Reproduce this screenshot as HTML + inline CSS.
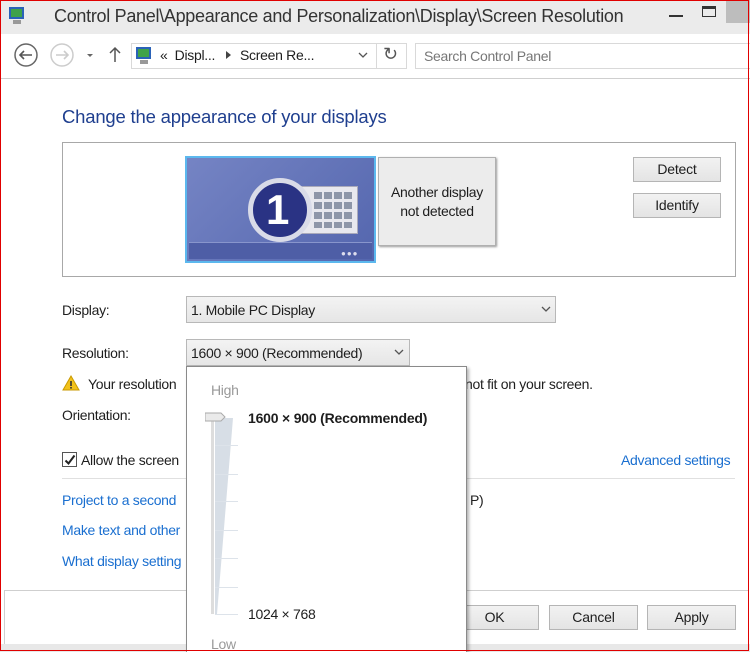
<!DOCTYPE html>
<html><head><meta charset="utf-8"><style>
*{margin:0;padding:0;box-sizing:border-box}
html,body{width:750px;height:652px;overflow:hidden}
body{background:#fff;font-family:"Liberation Sans",sans-serif;color:#1e1e1e;position:relative}
.a{position:absolute;white-space:nowrap}
.t{font-size:14px;letter-spacing:-0.3px}
.btn{position:absolute;background:linear-gradient(#f2f2f2,#e4e4e4);border:1px solid #b5b5b5;font-size:14px;text-align:center;letter-spacing:-0.2px}
.link{color:#1a6fd0}
.dd{position:absolute;background:linear-gradient(#f3f3f3,#e6e6e6);border:1px solid #b8b8b8;font-size:14px;padding:5px 0 0 4px;letter-spacing:-0.3px}
.tick{position:absolute;left:215px;width:23px;height:1px;background:#dde3ea}
</style></head><body>
<div class="a" style="left:0;top:0;width:750px;height:34px;background:#ebebeb"></div>
<svg class="a" style="left:8px;top:6px" width="18" height="20"><rect x="1" y="1" width="15" height="12" fill="#2a62b8"/><rect x="3" y="3" width="11" height="8" fill="#3fa24a"/><rect x="5" y="14" width="8" height="4" fill="#999"/></svg>
<div class="a" style="left:54px;top:6px;font-size:18px;color:#333;letter-spacing:-0.3px">Control Panel\Appearance and Personalization\Display\Screen Resolution</div>
<div class="a" style="left:669px;top:15px;width:14px;height:2px;background:#333"></div>
<div class="a" style="left:702px;top:6px;width:14px;height:11px;border:1px solid #333;border-top-width:3px"></div>
<div class="a" style="left:726px;top:0;width:24px;height:23px;background:#bdbdbd"></div>
<div class="a" style="left:0;top:78px;width:750px;height:1px;background:#cfcfcf"></div>
<svg class="a" style="left:12px;top:42px" width="110" height="28">
<circle cx="14" cy="13" r="11" fill="none" stroke="#666" stroke-width="1.5"/><path d="M20 13H8M12 9l-4 4 4 4" fill="none" stroke="#555" stroke-width="1.6"/>
<circle cx="50" cy="13" r="11" fill="none" stroke="#ccc" stroke-width="1.5"/><path d="M44 13h12M52 9l4 4-4 4" fill="none" stroke="#ccc" stroke-width="1.6"/>
<path d="M75 12l3 3 3-3z" fill="#666"/><path d="M103 20V6M98 11l5-5 5 5" fill="none" stroke="#555" stroke-width="1.5"/></svg>
<div class="a" style="left:131px;top:43px;width:276px;height:26px;border:1px solid #d9d9d9"></div>
<div class="a" style="left:376px;top:43px;width:1px;height:26px;background:#d9d9d9"></div>
<svg class="a" style="left:135px;top:46px" width="20" height="20"><rect x="1" y="1" width="15" height="12" fill="#2a62b8"/><rect x="3" y="3" width="11" height="8" fill="#3fa24a"/><rect x="5" y="14" width="8" height="4" fill="#999"/></svg>
<div class="a t" style="left:160px;top:47px">«&nbsp; Displ...</div>
<div class="a" style="left:226px;top:51px;width:0;height:0;border:4px solid transparent;border-left:5px solid #444;border-right:0"></div>
<div class="a t" style="left:240px;top:47px">Screen Re...</div>
<svg class="a" style="left:358px;top:52px" width="10" height="8"><path d="M1 1l4 4 4-4" fill="none" stroke="#555" stroke-width="1.3"/></svg>
<div class="a" style="left:383px;top:44px;font-size:18px;color:#555">&#8635;</div>
<div class="a" style="left:415px;top:43px;width:340px;height:26px;border:1px solid #d9d9d9"></div>
<div class="a t" style="left:424px;top:48px;color:#777">Search Control Panel</div>
<div class="a" style="left:62px;top:106px;font-size:18.5px;color:#1f3f8f;letter-spacing:-0.2px">Change the appearance of your displays</div>
<div class="a" style="left:62px;top:142px;width:674px;height:135px;border:1px solid #a8a8a8"></div>
<div class="a" style="left:185px;top:156px;width:191px;height:107px;border:2px solid #5cb8ee;background:linear-gradient(135deg,#7584c4,#5466ae)"></div>
<div class="a" style="left:189px;top:242px;width:183px;height:17px;background:#4e5ea6;border-top:1px solid #8895cc"></div>
<div class="a" style="left:341px;top:249px;font-size:8px;color:#dde;letter-spacing:1px">●●●</div>
<div class="a" style="left:290px;top:186px;width:68px;height:48px;background:#e8e8ee;border:1px solid #aab"></div>
<svg class="a" style="left:314px;top:192px" width="42" height="38"><g fill="#8e96a8"><rect x="0" y="0" width="8" height="7"/><rect x="10" y="0" width="8" height="7"/><rect x="20" y="0" width="8" height="7"/><rect x="30" y="0" width="8" height="7"/><rect x="0" y="10" width="8" height="7"/><rect x="10" y="10" width="8" height="7"/><rect x="20" y="10" width="8" height="7"/><rect x="30" y="10" width="8" height="7"/><rect x="0" y="20" width="8" height="7"/><rect x="10" y="20" width="8" height="7"/><rect x="20" y="20" width="8" height="7"/><rect x="30" y="20" width="8" height="7"/><rect x="0" y="30" width="8" height="6"/><rect x="10" y="30" width="8" height="6"/><rect x="20" y="30" width="8" height="6"/><rect x="30" y="30" width="8" height="6"/></g></svg>
<div class="a" style="left:248px;top:178px;width:64px;height:64px;border-radius:50%;background:#2a3384;border:5px solid #d9dbe8"></div>
<div class="a" style="left:266px;top:186px;font-size:42px;font-weight:bold;color:#fff">1</div>
<div class="a" style="left:378px;top:157px;width:118px;height:89px;background:#ececec;border:1px solid #b0b0b0;box-shadow:1px 1px 2px #999"></div>
<div class="a" style="left:378px;top:183px;width:118px;text-align:center;font-size:14px;line-height:19px;letter-spacing:-0.3px">Another display<br>not detected</div>
<div class="btn" style="left:633px;top:157px;width:88px;height:25px;line-height:23px">Detect</div>
<div class="btn" style="left:633px;top:193px;width:88px;height:25px;line-height:23px">Identify</div>
<div class="a t" style="left:62px;top:302px">Display:</div>
<div class="dd" style="left:186px;top:296px;width:370px;height:27px">1. Mobile PC Display</div>
<svg class="a" style="left:541px;top:306px" width="10" height="8"><path d="M1 1l4 4 4-4" fill="none" stroke="#555" stroke-width="1.3"/></svg>
<div class="a t" style="left:62px;top:345px">Resolution:</div>
<div class="dd" style="left:186px;top:339px;width:224px;height:27px">1600 × 900 (Recommended)</div>
<svg class="a" style="left:394px;top:349px" width="10" height="8"><path d="M1 1l4 4 4-4" fill="none" stroke="#555" stroke-width="1.3"/></svg>
<svg class="a" style="left:62px;top:375px" width="18" height="16"><path d="M9 1L17 15H1z" fill="#f2c21b" stroke="#c99a00"/><rect x="8.2" y="6" width="1.6" height="5" fill="#333"/><rect x="8.2" y="12" width="1.6" height="1.6" fill="#333"/></svg>
<div class="a t" style="left:88px;top:376px">Your resolution</div>
<div class="a t" style="left:465px;top:376px">not fit on your screen.</div>
<div class="a t" style="left:62px;top:407px">Orientation:</div>
<div class="a" style="left:62px;top:452px;width:15px;height:15px;border:1px solid #555;background:#fff"></div>
<svg class="a" style="left:64px;top:454px" width="12" height="12"><path d="M1.5 6.5l3 3 6-8" fill="none" stroke="#222" stroke-width="2"/></svg>
<div class="a t" style="left:81px;top:452px">Allow the screen</div>
<div class="a t link" style="left:621px;top:452px">Advanced settings</div>
<div class="a" style="left:62px;top:478px;width:673px;height:1px;background:#e0e0e0"></div>
<div class="a t link" style="left:62px;top:492px">Project to a second</div>
<div class="a t" style="left:470px;top:492px">P)</div>
<div class="a t link" style="left:62px;top:522px">Make text and other</div>
<div class="a t link" style="left:62px;top:553px">What display setting</div>
<div class="a" style="left:4px;top:590px;width:744px;height:1px;background:#cfcfcf"></div>
<div class="a" style="left:4px;top:590px;width:1px;height:54px;background:#cfcfcf"></div>
<div class="btn" style="left:450px;top:605px;width:89px;height:25px;line-height:23px">OK</div>
<div class="btn" style="left:549px;top:605px;width:89px;height:25px;line-height:23px">Cancel</div>
<div class="btn" style="left:647px;top:605px;width:89px;height:25px;line-height:23px">Apply</div>
<div class="a" style="left:0;top:644px;width:750px;height:8px;background:#e8e8e8"></div>
<div class="a" style="left:186px;top:366px;width:281px;height:290px;background:#fff;border:1px solid #8a8a8a;box-shadow:2px 2px 3px rgba(0,0,0,.3)"></div>
<div class="a t" style="left:211px;top:382px;color:#999">High</div>
<svg class="a" style="left:205px;top:410px" width="35" height="206"><path d="M10 8H28L12 204H10z" fill="#d7dee6"/><rect x="6" y="8" width="3" height="196" fill="#ddd"/><path d="M0 3h16l4 4-4 4H0z" fill="#eaeaea" stroke="#aaa"/></svg>
<div class="tick" style="top:445px"></div><div class="tick" style="top:474px"></div><div class="tick" style="top:501px"></div><div class="tick" style="top:530px"></div><div class="tick" style="top:558px"></div><div class="tick" style="top:587px"></div><div class="tick" style="top:614px"></div>
<div class="a" style="left:248px;top:410px;font-size:14px;font-weight:bold;letter-spacing:-0.2px">1600 × 900 (Recommended)</div>
<div class="a t" style="left:248px;top:606px">1024 × 768</div>
<div class="a t" style="left:211px;top:636px;color:#999">Low</div>
<div class="a" style="left:0;top:0;width:749px;height:651px;border:1px solid #e00000"></div>
</body></html>
